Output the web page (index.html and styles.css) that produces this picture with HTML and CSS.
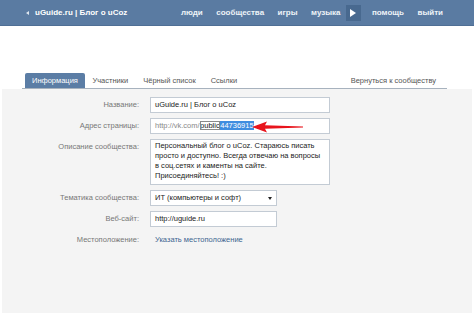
FILE: index.html
```html
<!DOCTYPE html>
<html lang="ru">
<head>
    <meta charset="UTF-8">
    <meta name="viewport" content="width=device-width, initial-scale=1.0">
    <title>Управление сообществом</title>
    <link rel="stylesheet" href="styles.css">
</head>
<body>
    <div class="topbar">
        <div class="brand">
            <span class="back-arrow"></span>
            <span>uGuide.ru | Блог о uCoz</span>
        </div>
        <nav class="menu">
            <a href="#">люди</a>
            <a href="#">сообщества</a>
            <a href="#">игры</a>
            <a href="#">музыка</a>
            <span class="player">
                <svg width="6" height="8" viewBox="0 0 6 8"><path d="M0 0 L6 4 L0 8 Z" fill="#fff"/></svg>
            </span>
            <a href="#">помощь</a>
            <a href="#">выйти</a>
        </nav>
    </div>

    <div class="tabs">
        <a href="#" class="tab active">Информация</a>
        <a href="#" class="tab">Участники</a>
        <a href="#" class="tab">Чёрный список</a>
        <a href="#" class="tab">Ссылки</a>
        <a href="#" class="tab tab-right">Вернуться к сообществу</a>
    </div>

    <div class="panel">
        <div class="form">
            <label>Название:</label>
            <div class="field input wide">uGuide.ru | Блог о uCoz</div>

            <label>Адрес страницы:</label>
            <div class="field input wide address">
                <span class="muted">http://vk.com/</span><span class="caret-box">public</span><span class="selected">44736915</span>
                <svg class="pointer" width="52" height="12" viewBox="0 0 52 12">
                    <path d="M0 6 L15 0.5 L13 4.2 L51 5.6 L51 6.4 L13 7.8 L15 11.5 Z" fill="#e8141c"/>
                </svg>
            </div>

            <label>Описание сообщества:</label>
            <div class="field textarea wide">Персональный блог о uCoz. Стараюсь писать просто и доступно. Всегда отвечаю на вопросы в соц.сетях и каменты на сайте. Присоединяйтесь! :)</div>

            <label>Тематика сообщества:</label>
            <div class="field input narrow select">
                <span>ИТ (компьютеры и софт)</span>
                <span class="dropdown"></span>
            </div>

            <label>Веб-сайт:</label>
            <div class="field input narrow">http://uguide.ru</div>

            <label>Местоположение:</label>
            <a href="#" class="field link">Указать местоположение</a>
        </div>
    </div>
</body>
</html>
```

FILE: styles.css
```css
/* General styling */
body {
    font-family: 'Liberation Sans', Arial, sans-serif;
    font-size: 7.5px;
    margin: 0;
    padding: 0;
    background-color: #fff;
    color: #222;
}

a {
    text-decoration: none;
}

/* Top bar */
.topbar {
    height: 26px;
    background-color: #5a7ba2;
    display: flex;
    justify-content: space-between;
    align-items: center;
    padding: 0 31px 0 26px;
    border-bottom: 1px solid #4f6f95;
    box-sizing: border-box;
}

.brand {
    display: flex;
    align-items: center;
    color: #fff;
    font-weight: bold;
    font-size: 8px;
}

.back-arrow {
    width: 0;
    height: 0;
    border-top: 2.5px solid transparent;
    border-bottom: 2.5px solid transparent;
    border-right: 3px solid #dfe7f0;
    margin-right: 6px;
}

.menu {
    display: flex;
    align-items: center;
    gap: 13.5px;
}

.menu a {
    color: #eef3f8;
    font-weight: bold;
    font-size: 8px;
}

.player {
    width: 15px;
    height: 16px;
    background-color: #48698f;
    display: flex;
    align-items: center;
    justify-content: center;
    margin: 0 -2px 0 -8.5px;
}

/* Tabs */
.tabs {
    display: flex;
    align-items: flex-end;
    margin: 47px 27px 0 22px;
    padding-left: 3px;
    border-bottom: 1px solid #a7b2be;
    height: 15px;
}

.tab {
    color: #555;
    padding: 0 7.5px;
    height: 15px;
    line-height: 15px;
}

.tab.active {
    background-color: #5b7da5;
    color: #fff;
    border-radius: 2px 2px 0 0;
    padding: 0 7px;
}

.tab-right {
    margin-left: auto;
    padding-right: 11px;
}

/* Panel with the form */
.panel {
    margin: 0 2px;
    height: 224px;
    background-color: #f4f4f4;
    padding-top: 8px;
    box-sizing: border-box;
}

.form {
    display: grid;
    grid-template-columns: 137px auto;
    column-gap: 11px;
    row-gap: 5px;
    align-items: start;
}

.form label {
    text-align: right;
    color: #777;
    line-height: 16px;
}

.field {
    box-sizing: border-box;
}

.input {
    height: 16px;
    line-height: 14px;
    background: #fff;
    border: 1px solid #c3cbd4;
    padding: 0 4px;
    white-space: nowrap;
    position: relative;
}

.wide {
    width: 180px;
}

.narrow {
    width: 127px;
}

.textarea {
    height: 46px;
    background: #fff;
    border: 1px solid #c3cbd4;
    padding: 1px 4px;
    line-height: 10px;
}

.muted {
    color: #888;
}

.caret-box {
    outline: 1px solid #8a8a8a;
    outline-offset: -1px;
    padding: 0 0.5px;
}

.selected {
    background-color: #3f8de0;
    color: #fff;
}

.pointer {
    position: absolute;
    left: 101px;
    top: 1.5px;
}

.select {
    display: flex;
    justify-content: space-between;
    align-items: center;
}

.dropdown {
    width: 0;
    height: 0;
    border-left: 2.5px solid transparent;
    border-right: 2.5px solid transparent;
    border-top: 3px solid #222;
}

.link {
    color: #3d6590;
    line-height: 16px;
    padding-left: 5px;
}
```
